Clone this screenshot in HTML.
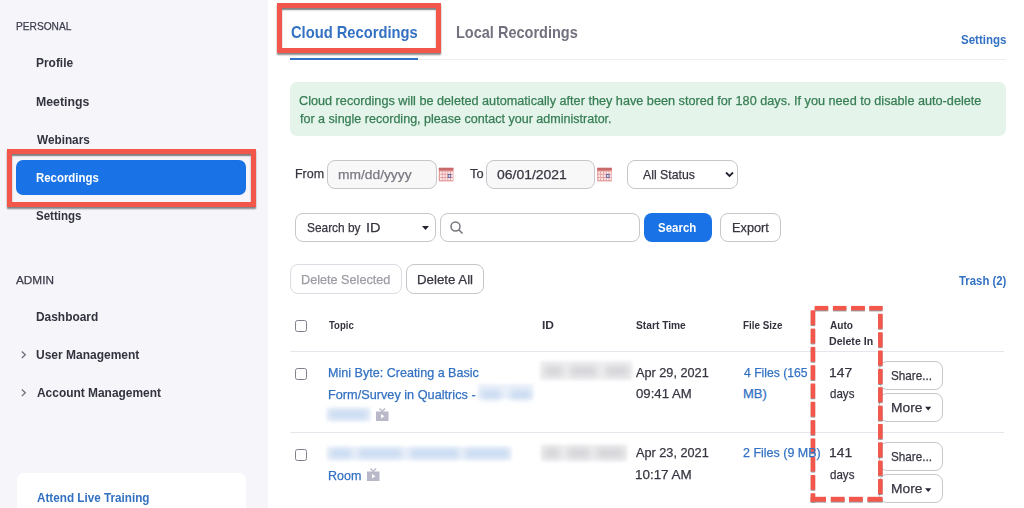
<!DOCTYPE html>
<html><head><meta charset="utf-8"><style>
html,body{margin:0;padding:0;width:1024px;height:508px;overflow:hidden;background:#fff;position:relative}
.t{position:absolute;line-height:0;white-space:pre;font-family:"Liberation Sans", sans-serif;transform-origin:0 0}
.r{-webkit-text-stroke:0.25px currentColor}
.a{position:absolute;box-sizing:border-box}
</style></head><body>
<!-- sidebar -->
<div class="a" style="left:0;top:0;width:268px;height:508px;background:#f5f5fa"></div>
<div class="a" style="left:16px;top:160px;width:230px;height:35px;border-radius:7px;background:#1a73e6"></div>
<div class="a" style="left:17px;top:473px;width:229px;height:50px;border-radius:7px;background:#fff"></div>
<!-- red annotation sidebar -->
<div class="a" style="left:7px;top:149px;width:249px;height:58px;border:5px solid #f3574b;box-shadow:0 2px 1.5px rgba(0,0,0,.45), inset 0 2px 1.5px rgba(0,0,0,.5)"></div>
<!-- tabs -->
<div class="a" style="left:290px;top:59px;width:716px;height:1px;background:#ececf2"></div>
<div class="a" style="left:290px;top:58px;width:128px;height:2px;background:#3371c2"></div>
<div class="a" style="left:277px;top:3px;width:164px;height:50px;border:5px solid #f3574b;box-shadow:0 2px 1.5px rgba(0,0,0,.45), inset 0 2px 1.5px rgba(0,0,0,.5)"></div>
<!-- alert -->
<div class="a" style="left:290px;top:82px;width:716px;height:54px;border-radius:7px;background:#e4f4eb"></div>
<!-- filters -->
<div class="a" style="left:327px;top:159.5px;width:110px;height:29px;border:1px solid #c6c6cb;border-radius:8px;background:#f8f8f9"></div>
<div class="a" style="left:486px;top:159.5px;width:109px;height:29px;border:1px solid #c6c6cb;border-radius:8px;background:#f8f8f9"></div>
<div class="a" style="left:627px;top:159.5px;width:110.5px;height:29px;border:1px solid #c6c6cb;border-radius:8px;background:#fff"></div>
<svg class="a" style="left:0;top:0" width="1024" height="508" viewBox="0 0 1024 508">
  <!-- calendar icons -->
  <g transform="translate(438.8,167.8)">
    <rect x="0" y="0" width="14.6" height="13.6" fill="#e49a9a"/>
    <rect x="0" y="0" width="14.6" height="2.6" fill="#c86a6a"/>
    <g fill="#fbeaea"><rect x="1.20" y="3.70" width="1.9" height="2.3"/><rect x="3.95" y="3.70" width="1.9" height="2.3"/><rect x="6.70" y="3.70" width="1.9" height="2.3"/><rect x="9.45" y="3.70" width="1.9" height="2.3"/><rect x="12.20" y="3.70" width="1.9" height="2.3"/><rect x="1.20" y="6.90" width="1.9" height="2.3"/><rect x="3.95" y="6.90" width="1.9" height="2.3"/><rect x="6.70" y="6.90" width="1.9" height="2.3"/><rect x="9.45" y="6.90" width="1.9" height="2.3"/><rect x="12.20" y="6.90" width="1.9" height="2.3"/><rect x="1.20" y="10.10" width="1.9" height="2.3"/><rect x="3.95" y="10.10" width="1.9" height="2.3"/><rect x="6.70" y="10.10" width="1.9" height="2.3"/><rect x="9.45" y="10.10" width="1.9" height="2.3"/><rect x="12.20" y="10.10" width="1.9" height="2.3"/></g>
    <rect x="9.4" y="6.7" width="2.5" height="2.9" fill="#e8e8f4" stroke="#5c5c9a" stroke-width="0.9"/>
  </g>
  <g transform="translate(597.2,167.8)">
    <rect x="0" y="0" width="14.6" height="13.6" fill="#e49a9a"/>
    <rect x="0" y="0" width="14.6" height="2.6" fill="#c86a6a"/>
    <g fill="#fbeaea"><rect x="1.20" y="3.70" width="1.9" height="2.3"/><rect x="3.95" y="3.70" width="1.9" height="2.3"/><rect x="6.70" y="3.70" width="1.9" height="2.3"/><rect x="9.45" y="3.70" width="1.9" height="2.3"/><rect x="12.20" y="3.70" width="1.9" height="2.3"/><rect x="1.20" y="6.90" width="1.9" height="2.3"/><rect x="3.95" y="6.90" width="1.9" height="2.3"/><rect x="6.70" y="6.90" width="1.9" height="2.3"/><rect x="9.45" y="6.90" width="1.9" height="2.3"/><rect x="12.20" y="6.90" width="1.9" height="2.3"/><rect x="1.20" y="10.10" width="1.9" height="2.3"/><rect x="3.95" y="10.10" width="1.9" height="2.3"/><rect x="6.70" y="10.10" width="1.9" height="2.3"/><rect x="9.45" y="10.10" width="1.9" height="2.3"/><rect x="12.20" y="10.10" width="1.9" height="2.3"/></g>
    <rect x="9.4" y="6.7" width="2.5" height="2.9" fill="#e8e8f4" stroke="#5c5c9a" stroke-width="0.9"/>
  </g>
  <!-- chevron All Status -->
  <polyline points="726,172.5 729.5,176 733,172.5" fill="none" stroke="#232333" stroke-width="1.8"/>
</svg>
<div class="a" style="left:295.3px;top:212.5px;width:140.7px;height:29px;border:1px solid #c6c6cb;border-radius:8px;background:#fff"></div>
<div class="a" style="left:439.5px;top:212.5px;width:200px;height:29px;border:1px solid #c6c6cb;border-radius:8px;background:transparent"></div>
<div class="a" style="left:643.5px;top:212.5px;width:68.5px;height:29px;border-radius:8px;background:#1a73e6"></div>
<div class="a" style="left:720px;top:212.5px;width:61px;height:29px;border:1px solid #c6c6cb;border-radius:8px;background:#fff"></div>
<div class="a" style="left:290px;top:264px;width:111.5px;height:29.5px;border:1px solid #dcdce4;border-radius:8px;background:#fff"></div>
<div class="a" style="left:406px;top:264px;width:78px;height:29.5px;border:1px solid #c6c6cb;border-radius:8px;background:#fff"></div>
<svg class="a" style="left:0;top:0" width="1024" height="508" viewBox="0 0 1024 508">
  <!-- caret search by -->
  <polygon points="422,226 429,226 425.5,230" fill="#232333"/>
  <!-- magnifier -->
  <circle cx="455.5" cy="226.5" r="4.5" fill="none" stroke="#76767f" stroke-width="1.5"/>
  <line x1="458.8" y1="229.8" x2="462.5" y2="233.5" stroke="#76767f" stroke-width="1.6"/>
  <!-- sidebar chevrons -->
  <polyline points="21.8,351.5 25.3,354.7 21.8,357.9" fill="none" stroke="#6e6e7e" stroke-width="1.3"/>
  <polyline points="21.8,389.5 25.3,392.8 21.8,396.1" fill="none" stroke="#6e6e7e" stroke-width="1.3"/>
</svg>
<!-- table -->
<div class="a" style="left:295px;top:320px;width:12.3px;height:12px;border:1.5px solid #80808a;border-radius:2.5px"></div>
<div class="a" style="left:290px;top:351px;width:714px;height:1px;background:#e6e6ec"></div>
<div class="a" style="left:295px;top:367.5px;width:12.3px;height:12px;border:1.5px solid #80808a;border-radius:2.5px"></div>
<div class="a" style="left:290px;top:432px;width:714px;height:1px;background:#e6e6ec"></div>
<div class="a" style="left:295px;top:449px;width:12.3px;height:12px;border:1.5px solid #80808a;border-radius:2.5px"></div>
<!-- blur blocks -->
<div class="a" style="left:478.3px;top:384.2px;width:55.19999999999999px;height:14.800000000000011px;background:#edf2fa;filter:blur(1.5px)"></div>
<div class="a" style="left:481px;top:389.9px;width:19.80000000000001px;height:9px;background:#c8daf1;filter:blur(3px)"></div>
<div class="a" style="left:509.6px;top:389.9px;width:21.899999999999977px;height:9px;background:#c8daf1;filter:blur(3px)"></div>
<div class="a" style="left:327.4px;top:407.5px;width:42.30000000000001px;height:13.800000000000011px;background:#edf2fa;filter:blur(1.5px)"></div>
<div class="a" style="left:329px;top:410.0px;width:39px;height:9px;background:#c8daf1;filter:blur(3px)"></div>
<div class="a" style="left:327.4px;top:447.4px;width:183.5px;height:12.600000000000023px;background:#edf2fa;filter:blur(1.5px)"></div>
<div class="a" style="left:329.8px;top:449.2px;width:22.399999999999977px;height:9px;background:#c8daf1;filter:blur(3px)"></div>
<div class="a" style="left:358px;top:449.2px;width:44px;height:9px;background:#c8daf1;filter:blur(3px)"></div>
<div class="a" style="left:409.8px;top:449.2px;width:48.89999999999998px;height:9px;background:#c8daf1;filter:blur(3px)"></div>
<div class="a" style="left:464.5px;top:449.2px;width:44.0px;height:9px;background:#c8daf1;filter:blur(3px)"></div>
<div class="a" style="left:539.5px;top:361.1px;width:92.5px;height:18.599999999999966px;background:#f1f1f3;filter:blur(1.5px)"></div>
<div class="a" style="left:544px;top:366.0px;width:18.700000000000045px;height:10px;background:#d3d3d7;filter:blur(3.5px)"></div>
<div class="a" style="left:570px;top:366.0px;width:26.5px;height:10px;background:#d3d3d7;filter:blur(3.5px)"></div>
<div class="a" style="left:604.7px;top:366.0px;width:24.699999999999932px;height:10px;background:#d3d3d7;filter:blur(3.5px)"></div>
<div class="a" style="left:540.5px;top:445.0px;width:86.5px;height:15.5px;background:#f1f1f3;filter:blur(1.5px)"></div>
<div class="a" style="left:544px;top:448.0px;width:16px;height:10px;background:#d3d3d7;filter:blur(3.5px)"></div>
<div class="a" style="left:567px;top:448.0px;width:23px;height:10px;background:#d3d3d7;filter:blur(3.5px)"></div>
<div class="a" style="left:596px;top:448.0px;width:28px;height:10px;background:#d3d3d7;filter:blur(3.5px)"></div>
<svg class="a" style="left:0;top:0" width="1024" height="508" viewBox="0 0 1024 508">
  <g transform="translate(376,408.5)">
    <rect x="0" y="3" width="12.5" height="9.5" fill="#b8b8c8"/>
    <line x1="3.5" y1="0" x2="6.25" y2="3" stroke="#b8b8c8" stroke-width="1.3"/>
    <line x1="9" y1="0" x2="6.25" y2="3" stroke="#b8b8c8" stroke-width="1.3"/>
    <polygon points="5,5.5 5,10 8.5,7.75" fill="#fff"/>
  </g>
  <g transform="translate(367,468.5)">
    <rect x="0" y="3" width="12.5" height="9.5" fill="#b8b8c8"/>
    <line x1="3.5" y1="0" x2="6.25" y2="3" stroke="#b8b8c8" stroke-width="1.3"/>
    <line x1="9" y1="0" x2="6.25" y2="3" stroke="#b8b8c8" stroke-width="1.3"/>
    <polygon points="5,5.5 5,10 8.5,7.75" fill="#fff"/>
  </g>
</svg>
<!-- share/more buttons -->
<div class="a" style="left:879px;top:361.2px;width:64.4px;height:28.5px;border:1px solid #c6c6cb;border-radius:8px;background:#fff"></div>
<div class="a" style="left:879px;top:393.1px;width:64.4px;height:28.6px;border:1px solid #c6c6cb;border-radius:8px;background:#fff"></div>
<div class="a" style="left:879px;top:442.3px;width:64.4px;height:28.6px;border:1px solid #c6c6cb;border-radius:8px;background:#fff"></div>
<div class="a" style="left:879px;top:474.4px;width:64.4px;height:28.6px;border:1px solid #c6c6cb;border-radius:8px;background:#fff"></div>
<svg class="a" style="left:0;top:0" width="1024" height="508" viewBox="0 0 1024 508">
  <polygon points="925.1,406.8 931.3,406.8 928.2,410.6" fill="#232333"/>
  <polygon points="925.1,488.2 931.3,488.2 928.2,492" fill="#232333"/>
  <!-- dashed annotation -->
  <g fill="#f3574b" style="filter:drop-shadow(0 1px 0.6px rgba(0,0,0,.4))">
    <rect x="814.7" y="305.9" width="13.5" height="4.5"/>
    <rect x="832.9" y="305.9" width="13.5" height="4.5"/>
    <rect x="851.1" y="305.9" width="13.8" height="4.5"/>
    <rect x="869.3" y="305.9" width="13.3" height="4.5"/>
    <rect x="810.7" y="310.3" width="4.5" height="14.8"/>
    <rect x="810.7" y="328.6" width="4.5" height="14.8"/>
    <rect x="810.7" y="346.9" width="4.5" height="14.8"/>
    <rect x="810.7" y="365.2" width="4.5" height="14.8"/>
    <rect x="810.7" y="383.5" width="4.5" height="14.8"/>
    <rect x="810.7" y="401.8" width="4.5" height="14.8"/>
    <rect x="810.7" y="420.1" width="4.5" height="14.8"/>
    <rect x="810.7" y="438.4" width="4.5" height="14.8"/>
    <rect x="810.7" y="456.7" width="4.5" height="14.8"/>
    <rect x="810.7" y="475.0" width="4.5" height="14.8"/>
    <rect x="810.7" y="493.2" width="4.5" height="8.6"/>
    <rect x="878.1" y="313.8" width="4.5" height="15.0"/>
    <rect x="878.1" y="332.2" width="4.5" height="15.0"/>
    <rect x="878.1" y="350.5" width="4.5" height="15.0"/>
    <rect x="878.1" y="368.9" width="4.5" height="15.0"/>
    <rect x="878.1" y="387.2" width="4.5" height="15.0"/>
    <rect x="878.1" y="405.6" width="4.5" height="15.0"/>
    <rect x="878.1" y="423.9" width="4.5" height="15.0"/>
    <rect x="878.1" y="442.3" width="4.5" height="15.0"/>
    <rect x="878.1" y="460.6" width="4.5" height="15.0"/>
    <rect x="878.1" y="479.0" width="4.5" height="15.0"/>
    <rect x="810.7" y="496.8" width="15.3" height="4.8"/>
    <rect x="830.8" y="496.8" width="13.8" height="4.8"/>
    <rect x="849.0" y="496.8" width="13.8" height="4.8"/>
    <rect x="867.5" y="496.8" width="15.1" height="4.8"/>
  </g>
</svg>

<div class='t r' style='left:16.08px;top:26.20px;font-size:11px;font-weight:400;color:#3c3c4c;transform:scaleX(0.9237)'>PERSONAL</div>
<div class='t' style='left:35.88px;top:63.40px;font-size:13px;font-weight:700;color:#33333f;transform:scaleX(0.9179)'>Profile</div>
<div class='t' style='left:35.85px;top:102.00px;font-size:13px;font-weight:700;color:#33333f;transform:scaleX(0.9455)'>Meetings</div>
<div class='t' style='left:36.80px;top:140.40px;font-size:13px;font-weight:700;color:#33333f;transform:scaleX(0.9052)'>Webinars</div>
<div class='t' style='left:36.42px;top:177.60px;font-size:13px;font-weight:700;color:#ffffff;transform:scaleX(0.8786)'>Recordings</div>
<div class='t' style='left:35.91px;top:216.40px;font-size:13px;font-weight:700;color:#33333f;transform:scaleX(0.8860)'>Settings</div>
<div class='t r' style='left:16.20px;top:280.20px;font-size:11px;font-weight:400;color:#3c3c4c;transform:scaleX(1.0714)'>ADMIN</div>
<div class='t' style='left:35.98px;top:317.10px;font-size:13px;font-weight:700;color:#33333f;transform:scaleX(0.9167)'>Dashboard</div>
<div class='t' style='left:35.98px;top:355.40px;font-size:13px;font-weight:700;color:#33333f;transform:scaleX(0.9225)'>User Management</div>
<div class='t' style='left:36.50px;top:393.20px;font-size:13px;font-weight:700;color:#33333f;transform:scaleX(0.9178)'>Account Management</div>
<div class='t' style='left:37.40px;top:498.00px;font-size:13px;font-weight:700;color:#3371c2;transform:scaleX(0.9000)'>Attend Live Training</div>
<div class='t' style='left:290.54px;top:32.80px;font-size:17px;font-weight:700;color:#3371c2;transform:scaleX(0.8648)'>Cloud Recordings</div>
<div class='t' style='left:455.55px;top:33.10px;font-size:17px;font-weight:700;color:#71717f;transform:scaleX(0.8532)'>Local Recordings</div>
<div class='t' style='left:960.88px;top:39.60px;font-size:12.5px;font-weight:700;color:#3371c2;transform:scaleX(0.9229)'>Settings</div>
<div class='t r' style='left:298.59px;top:100.60px;font-size:12.5px;font-weight:400;color:#367d53;transform:scaleX(1.0134)'>Cloud recordings will be deleted automatically after they have been stored for 180 days. If you need to disable auto-delete</div>
<div class='t r' style='left:299.60px;top:118.50px;font-size:12.5px;font-weight:400;color:#367d53;transform:scaleX(1.0032)'>for a single recording, please contact your administrator.</div>
<div class='t r' style='left:294.94px;top:173.80px;font-size:13px;font-weight:400;color:#363642;transform:scaleX(0.9586)'>From</div>
<div class='t r' style='left:337.54px;top:174.50px;font-size:13px;font-weight:400;color:#7a7a84;transform:scaleX(1.0603)'>mm/dd/yyyy</div>
<div class='t r' style='left:469.80px;top:173.80px;font-size:13px;font-weight:400;color:#363642;transform:scaleX(0.9846)'>To</div>
<div class='t r' style='left:497.10px;top:175.00px;font-size:13px;font-weight:400;color:#363642;transform:scaleX(1.0723)'>06/01/2021</div>
<div class='t r' style='left:643.00px;top:175.40px;font-size:13px;font-weight:400;color:#363642;transform:scaleX(0.9455)'>All Status</div>
<div class='t r' style='left:306.69px;top:228.20px;font-size:13px;font-weight:400;color:#363642;transform:scaleX(0.9138)'>Search by</div>
<div class='t r' style='left:366.08px;top:228.20px;font-size:13px;font-weight:400;color:#363642;transform:scaleX(1.1182)'>ID</div>
<div class='t' style='left:658.32px;top:227.70px;font-size:13px;font-weight:700;color:#ffffff;transform:scaleX(0.8833)'>Search</div>
<div class='t r' style='left:731.72px;top:227.70px;font-size:13px;font-weight:400;color:#363642;transform:scaleX(0.9811)'>Export</div>
<div class='t r' style='left:301.43px;top:279.70px;font-size:13px;font-weight:400;color:#9c9ca3;transform:scaleX(0.9733)'>Delete Selected</div>
<div class='t r' style='left:416.88px;top:279.70px;font-size:13px;font-weight:400;color:#363642;transform:scaleX(1.0208)'>Delete All</div>
<div class='t' style='left:958.80px;top:280.80px;font-size:13px;font-weight:700;color:#3371c2;transform:scaleX(0.8741)'>Trash (2)</div>
<div class='t' style='left:328.90px;top:325.20px;font-size:11px;font-weight:700;color:#33333f;transform:scaleX(0.8661)'>Topic</div>
<div class='t' style='left:542.21px;top:325.20px;font-size:11px;font-weight:700;color:#33333f;transform:scaleX(1.0900)'>ID</div>
<div class='t' style='left:636.25px;top:325.20px;font-size:11px;font-weight:700;color:#33333f;transform:scaleX(0.9292)'>Start Time</div>
<div class='t' style='left:742.85px;top:324.90px;font-size:11px;font-weight:700;color:#33333f;transform:scaleX(0.8953)'>File Size</div>
<div class='t' style='left:829.70px;top:324.90px;font-size:11px;font-weight:700;color:#33333f;transform:scaleX(0.9200)'>Auto</div>
<div class='t' style='left:828.74px;top:340.50px;font-size:11px;font-weight:700;color:#33333f;transform:scaleX(0.9622)'>Delete In</div>
<div class='t r' style='left:327.73px;top:373.30px;font-size:13px;font-weight:400;color:#3371c2;transform:scaleX(0.9665)'>Mini Byte: Creating a Basic</div>
<div class='t r' style='left:327.72px;top:394.70px;font-size:13px;font-weight:400;color:#3371c2;transform:scaleX(0.9780)'>Form/Survey in Qualtrics -</div>
<div class='t r' style='left:636.40px;top:372.50px;font-size:13px;font-weight:400;color:#363642;transform:scaleX(0.9770)'>Apr 29, 2021</div>
<div class='t r' style='left:636.40px;top:394.00px;font-size:13px;font-weight:400;color:#363642;transform:scaleX(1.0130)'>09:41 AM</div>
<div class='t r' style='left:743.90px;top:372.80px;font-size:13px;font-weight:400;color:#3371c2;transform:scaleX(0.9353)'>4 Files (165</div>
<div class='t r' style='left:742.90px;top:393.70px;font-size:13px;font-weight:400;color:#3371c2;transform:scaleX(1.0000)'>MB)</div>
<div class='t r' style='left:828.93px;top:372.80px;font-size:13px;font-weight:400;color:#363642;transform:scaleX(1.0650)'>147</div>
<div class='t r' style='left:830.00px;top:394.00px;font-size:13px;font-weight:400;color:#363642;transform:scaleX(0.8889)'>days</div>
<div class='t r' style='left:891.10px;top:375.70px;font-size:13px;font-weight:400;color:#363642;transform:scaleX(0.9023)'>Share...</div>
<div class='t r' style='left:890.94px;top:407.60px;font-size:13px;font-weight:400;color:#363642;transform:scaleX(1.0607)'>More</div>
<div class='t r' style='left:327.74px;top:475.60px;font-size:13px;font-weight:400;color:#3371c2;transform:scaleX(0.9606)'>Room</div>
<div class='t r' style='left:636.40px;top:453.30px;font-size:13px;font-weight:400;color:#363642;transform:scaleX(0.9770)'>Apr 23, 2021</div>
<div class='t r' style='left:635.37px;top:474.80px;font-size:13px;font-weight:400;color:#363642;transform:scaleX(1.0321)'>10:17 AM</div>
<div class='t r' style='left:742.94px;top:453.40px;font-size:13px;font-weight:400;color:#3371c2;transform:scaleX(0.9608)'>2 Files (9 MB)</div>
<div class='t r' style='left:828.93px;top:453.40px;font-size:13px;font-weight:400;color:#363642;transform:scaleX(1.0650)'>141</div>
<div class='t r' style='left:830.00px;top:475.00px;font-size:13px;font-weight:400;color:#363642;transform:scaleX(0.8889)'>days</div>
<div class='t r' style='left:891.10px;top:457.40px;font-size:13px;font-weight:400;color:#363642;transform:scaleX(0.9023)'>Share...</div>
<div class='t r' style='left:890.94px;top:488.90px;font-size:13px;font-weight:400;color:#363642;transform:scaleX(1.0607)'>More</div>
</body></html>
